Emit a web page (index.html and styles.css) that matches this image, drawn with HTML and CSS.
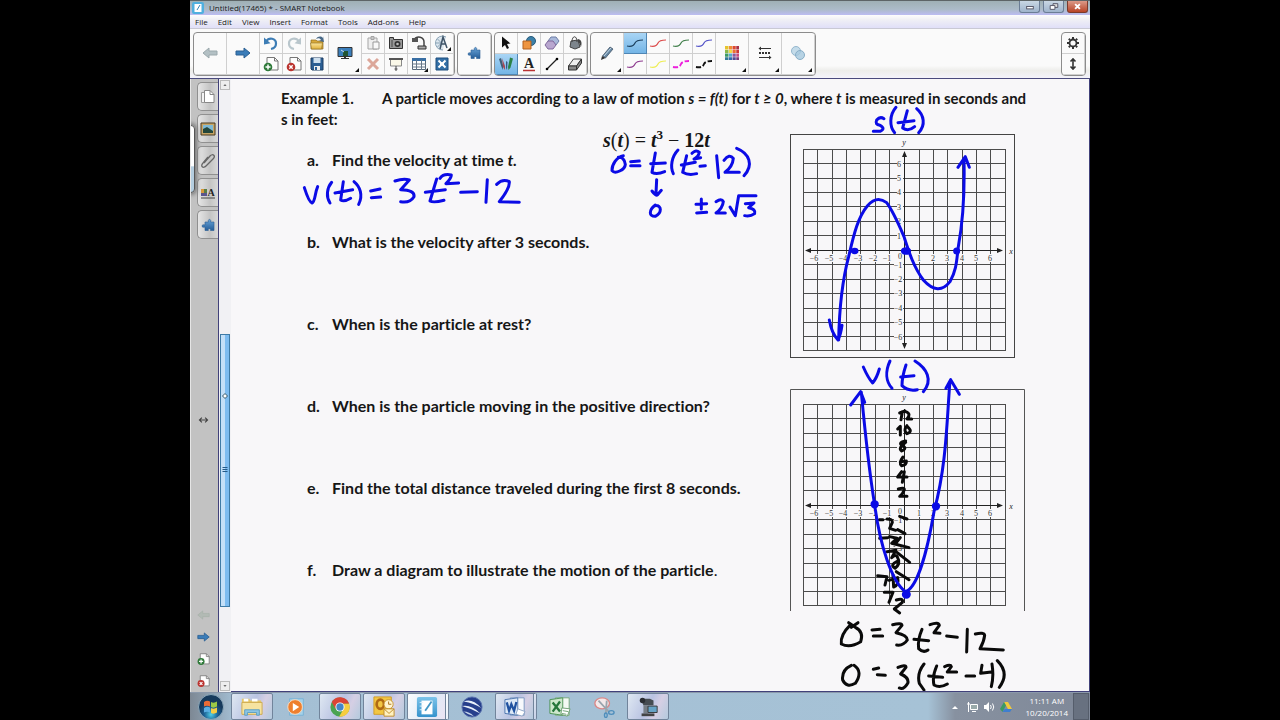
FILE: index.html
```html
<!DOCTYPE html>
<html lang="en">
<head>
<meta charset="utf-8">
<title>Untitled(17465) * - SMART Notebook</title>
<link rel="stylesheet" href="styles.css">
</head>
<body>
<svg class="defs" aria-hidden="true">
  <defs>
    <linearGradient id="blue" x2="0" y2="1"><stop stop-color="#6aa5d8"/><stop offset="1" stop-color="#245c98"/></linearGradient>
    <linearGradient id="gold" x2="0" y2="1"><stop stop-color="#fbe49a"/><stop offset="1" stop-color="#e0b23c"/></linearGradient>
    <radialGradient id="orbfill" cy=".8"><stop stop-color="#4fd0e8"/><stop offset=".55" stop-color="#1c5f93"/><stop offset="1" stop-color="#163a5c"/></radialGradient>
    <linearGradient id="sky" x2="0" y2="1"><stop stop-color="#7cc4ea"/><stop offset="1" stop-color="#3592cc"/></linearGradient>
    <symbol id="arrow" viewBox="0 0 16 12"><path d="M1 4h8V1l6 5-6 5V8H1z"/></symbol>
    <symbol id="sheet" viewBox="0 0 16 16"><path d="M4 1.500h7.500l3.500 3.500V14H4z" fill="#fdfdfd" stroke="#777"/><path d="M11.500 1.500V5H15" fill="none" stroke="#777"/></symbol>
    <symbol id="page-add" viewBox="0 0 16 16"><use href="#sheet"/><circle cx="5" cy="11" r="4.300" fill="#2f7a3a"/><path d="M5 8.500v5M2.500 11h5" stroke="#fff" stroke-width="1.500"/></symbol>
    <symbol id="page-del" viewBox="0 0 16 16"><use href="#sheet"/><circle cx="5" cy="11" r="4.300" fill="#bb3430"/><path d="M3.300 9.300l3.400 3.400M6.700 9.300l-3.400 3.400" stroke="#fff" stroke-width="1.400"/></symbol>
    <symbol id="undo" viewBox="0 0 16 16"><path d="M3 6.500C6 2 13 3 13 8.500c0 3-2.500 5-5 5.500" fill="none" stroke-width="2.200"/><path d="M1 2.500v7l6.500-1.300z" stroke="none"/></symbol>
    <symbol id="puzzle" viewBox="0 0 16 16"><path d="M6 5h2.500C7 1.500 12 1.500 10.500 5H14v8.500h-3.500c.8-2.500-3-2.500-2.200 0H5v-3.500C1 11.500 1 6.500 5 8V5z" fill="url(#blue)" stroke="#2b5f96" stroke-width=".6"/></symbol>
    <symbol id="wave" viewBox="0 0 18 10"><path d="M1 8C6 9 8 7.500 9 5s4-3 8-3" fill="none"/></symbol>
    <symbol id="grid" viewBox="0 0 236 224">
      <path d="M13.500 16V217M27.500 16V217M42.500 16V217M56.500 16V217M70.500 16V217M85.500 16V217M99.500 16V217M129.500 16V217M143.500 16V217M157.500 16V217M172.500 16V217M186.500 16V217M200.500 16V217M215.500 16V217M13 15.500H216M13 29.500H216M13 44.500H216M13 58.500H216M13 72.500H216M13 87.500H216M13 101.500H216M13 130.500H216M13 145.500H216M13 159.500H216M13 174.500H216M13 188.500H216M13 202.500H216M13 216.500H216" stroke="#4c4c4c" fill="none"/>
      <path d="M114.500 20V214M17 116.500H212" stroke="#222"/>
      <path d="M15 116.500l6-2.500v5zM213 116.500l-6-2.500v5z" fill="#222"/>
      <g fill="#f8f7f9"><path d="M19 120h9v8h-9zM34 120h9v8h-9zM49 120h9v8h-9zM63 120h9v8h-9zM78 120h9v8h-9zM92 120h9v8h-9zM108 118h5v9h-5zM127 120h4v8h-4zM141 120h5v8h-5zM155 120h5v8h-5zM169 120h6v8h-6zM184 120h5v8h-5zM198 120h5v8h-5z"/></g>
      <g class="graph-num"><text x="24" y="127">−6</text><text x="39" y="127">−5</text><text x="53" y="127">−4</text><text x="68" y="127">−3</text><text x="83" y="127">−2</text><text x="97" y="127">−1</text><text x="110" y="125">0</text><text x="129" y="127">1</text><text x="143" y="127">2</text><text x="157" y="127">3</text><text x="172" y="127">4</text><text x="186" y="127">5</text><text x="200" y="127">6</text></g>
      <g class="graph-var"><text x="114" y="11">y</text><text x="221" y="120">x</text></g>
    </symbol>
  </defs>
</svg>

<div class="desktop">
  <header class="titlebar">
    <svg class="app-icon" viewBox="0 0 12 12"><rect width="12" height="12" rx="2" fill="#50b0df"/><path d="M2.500 2h7v8h-7z" fill="#fff"/><path d="M5 8l3-5" stroke="#3284b8"/></svg>
    <span class="title">Untitled(17465) * - SMART Notebook</span>
    <div class="window-buttons">
      <button aria-label="Minimize"><svg viewBox="0 0 20 11"><rect x="7" y="5.500" width="7" height="2.500" fill="#fff" stroke="#556"/></svg></button>
      <button aria-label="Restore"><svg viewBox="0 0 20 11"><path d="M9.500 2.500h5v4h-5z" fill="#ddd" stroke="#556"/><path d="M6.500 4.500h5v4h-5z" fill="#fff" stroke="#556"/></svg></button>
      <button class="close" aria-label="Close"><svg viewBox="0 0 20 11"><path d="M7.500 3l5 5M12.500 3l-5 5" stroke="#fff" stroke-width="2"/></svg></button>
    </div>
  </header>

  <nav class="menubar">
    <button>File</button><button>Edit</button><button>View</button><button>Insert</button><button>Format</button><button>Tools</button><button>Add-ons</button><button>Help</button>
  </nav>

  <div class="toolbar">
    <div class="group">
      <button class="tall" aria-label="Previous page"><svg class="i16 flip pale-arrow"><use href="#arrow"/></svg></button>
      <button class="tall" aria-label="Next page"><svg class="i16 blue-arrow"><use href="#arrow"/></svg></button>
      <button aria-label="Undo"><svg class="i16 undo"><use href="#undo"/></svg></button>
      <button aria-label="Add page"><svg class="i16"><use href="#page-add"/></svg></button>
      <button aria-label="Redo"><svg class="i16 flip redo"><use href="#undo"/></svg></button>
      <button aria-label="Delete page"><svg class="i16"><use href="#page-del"/></svg></button>
      <button aria-label="Open"><svg class="i16" viewBox="0 0 16 16"><path d="M2 5h5l1 1h6v8H2z" fill="#d9a93a" stroke="#8d6c1e" stroke-width=".7"/><path d="M1.500 8h12l-1 6h-10z" fill="url(#gold)" stroke="#9a7a2c" stroke-width=".7"/><path d="M7 4c2-3 5-3 7-1v-2l1 6-5-1 2-1c-1-2-3-2-5-1z" fill="#4a6a88"/></svg></button>
      <button aria-label="Save"><svg class="i16" viewBox="0 0 16 16"><path d="M2 2h12v12H3l-1-1z" fill="#2b5e93" stroke="#1d3d63"/><path d="M4.500 2h7v5h-7z" fill="#cfe0ef"/><path d="M5 10h6v4H5z" fill="#eee"/><path d="M6 11h2v3H6z" fill="#2b5e93"/></svg></button>
      <button class="tall more" aria-label="Display"><svg class="i16" viewBox="0 0 16 16"><path d="M1 2.500h14v9H1z" fill="#3b7fbc" stroke="#333"/><path d="M7 11h2v2h3v1H4v-1h3z" fill="#333"/><path d="M6 6h5v5H6z" fill="#253"/><path d="M4 5l3 2" stroke="#cde"/></svg></button>
      <button aria-label="Paste"><svg class="i16" viewBox="0 0 16 16"><path d="M3 3h9v11H3zM6 1.500h3v3H6z" fill="#eee" stroke="#a5a5a5"/><path d="M8 7h6v7H8z" fill="#f8f8f8" stroke="#999"/></svg></button>
      <button aria-label="Delete"><svg class="i16" viewBox="0 0 16 16"><path d="M3 3l10 10M13 3L3 13" stroke="#dca79a" stroke-width="3"/></svg></button>
      <button aria-label="Screen capture"><svg class="i16" viewBox="0 0 16 16"><path d="M1.500 2.500v11h13v-9h-9v-2z" fill="#999" stroke="#333"/><circle cx="9.500" cy="9" r="3" fill="#333"/><circle cx="9.500" cy="9" r="1.300" fill="#bbb"/><path d="M4 5v7" stroke="#444"/></svg></button>
      <button aria-label="Screen shade"><svg class="i16" viewBox="0 0 16 16"><path d="M1 3h14" stroke="#555" stroke-width="2"/><path d="M2.500 4v6h11V4" fill="#faf8e8" stroke="#888"/><path d="M8 10v5" stroke="#444"/><path d="M6.500 13h3" stroke="#444"/></svg></button>
      <button aria-label="Document camera"><svg class="i16" viewBox="0 0 16 16"><path d="M3 5c3-5 10-3 10 2v5" fill="none" stroke="#444" stroke-width="1.500"/><path d="M1 3h6v4H1z" fill="#555"/><path d="M7 11h8v3H7z" fill="#aaa" stroke="#333"/></svg></button>
      <button class="more" aria-label="Table"><svg class="i16" viewBox="0 0 16 16"><path d="M1.500 2.500h13v11h-13z" fill="#fff" stroke="#567"/><path d="M1 2h14v3H1z" fill="#386ea3"/><path d="M1 8h14M1 11h14M5.500 4v10M10.500 4v10" stroke="#678"/></svg></button>
      <button class="more" aria-label="Measurement tools"><svg class="i16" viewBox="0 0 16 16"><path d="M12 2A7 7 0 1 0 9 15" fill="#dbe6ee" stroke="#8aa3b5"/><path d="M2 8h6M3.500 4l4 4M3.500 12l4-4" stroke="#8aa3b5"/><path d="M6 14l3-12 4 11M7 9h5" fill="none" stroke="#3f5468" stroke-width="1.500"/></svg></button>
      <button aria-label="Activity builder"><svg class="i16" viewBox="0 0 16 16"><path d="M2 2h12v12H2z" fill="#3470a6" stroke="#1d4c7c"/><path d="M4.500 4.500l7 7M11.500 4.500l-7 7" stroke="#fff" stroke-width="2"/><path d="M6 8h4" stroke="#fff" stroke-width="3"/></svg></button>
    </div>
    <div class="group">
      <button class="tall" aria-label="Add-ons"><svg class="i16"><use href="#puzzle"/></svg></button>
    </div>
    <div class="group">
      <button aria-label="Select"><svg class="i16" viewBox="0 0 16 16"><path d="M4 1.500v11l3-2.500 2 4 2-1-2-4 3.500-.5z" fill="#111"/></svg></button>
      <button class="on" aria-label="Pens"><svg class="i16" viewBox="0 0 16 16"><path d="M1 3l2.500 8 1.500 3V9L3 2z" fill="#3e5c74"/><path d="M4 2l3 8v4L5 11z" fill="#a84a56"/><path d="M8 5l1.500 1L9 14l-1-2z" fill="#345a86"/><path d="M12 1.500l3 1-2.500 9-2 2.500-.5-3z" fill="#2b8146"/></svg></button>
      <button aria-label="Shapes"><svg class="i16" viewBox="0 0 16 16"><circle cx="10" cy="6" r="4.500" fill="#3c80a8" stroke="#26597a"/><path d="M2 6h8v8H2z" fill="#ee9440" stroke="#b3601e"/></svg></button>
      <button aria-label="Text"><svg class="i16" viewBox="0 0 16 16"><text x="8" y="12" class="letter-icon">A</text><path d="M2 14.500h12" stroke="#b33" stroke-width="1.500"/></svg></button>
      <button aria-label="Regular polygons"><svg class="i16" viewBox="0 0 16 16"><path d="M7 2h5l3 4-3 4H7L4 6z" fill="#a9b8da" stroke="#6d7da5"/><path d="M4 6h5l3 4-3 4H4l-3-4z" fill="#b8a6cf" stroke="#80699c"/></svg></button>
      <button aria-label="Lines"><svg class="i16" viewBox="0 0 16 16"><path d="M3 13L13 3" stroke="#222" stroke-width="1.300"/><circle cx="3" cy="13" r="1.300"/><circle cx="13" cy="3" r="1.300"/></svg></button>
      <button aria-label="Fill"><svg class="i16" viewBox="0 0 16 16"><path d="M4 6l7-1 2 7-5 2-5-2z" fill="#7d858c" stroke="#444"/><path d="M5 7c0-7 5-7 5 0" fill="none" stroke="#444"/><path d="M11 4c4 1 4 4 3 8-1-2-1-4-3-5z" fill="#444"/></svg></button>
      <button aria-label="Eraser"><svg class="i16" viewBox="0 0 16 16"><path d="M1.500 10l5-7h8l-5 7z" fill="#eee" stroke="#444"/><path d="M1.500 10h8v4h-8zM9.500 10l5-7v4l-5 7z" fill="#888" stroke="#333"/></svg></button>
    </div>
    <div class="group">
      <button class="tall more" aria-label="Pen types"><svg class="i16" viewBox="0 0 16 16"><path d="M3.500 11L11 2l3 2-7.500 9z" fill="#6688a4" stroke="#445668" stroke-width=".8"/><path d="M3 11l3.500 2L2 15z" fill="#333"/><path d="M5 11l7-8" stroke="#c5d8e6"/></svg></button>
      <button class="on" aria-label="Black pen"><svg class="wave" stroke="#1d405e"><use href="#wave"/></svg></button>
      <button aria-label="Purple pen"><svg class="wave" stroke="#8f3d91"><use href="#wave"/></svg></button>
      <button aria-label="Red pen"><svg class="wave" stroke="#dc4b4b"><use href="#wave"/></svg></button>
      <button aria-label="Yellow highlighter"><svg class="wave" stroke="#eeee55"><use href="#wave"/></svg></button>
      <button aria-label="Green pen"><svg class="wave" stroke="#42804c"><use href="#wave"/></svg></button>
      <button aria-label="Magenta dashed pen"><svg class="wave dashed" stroke="#ec20dc"><use href="#wave"/></svg></button>
      <button aria-label="Blue pen"><svg class="wave" stroke="#5454c8"><use href="#wave"/></svg></button>
      <button aria-label="Black dashed pen"><svg class="wave dashed" stroke="#111"><use href="#wave"/></svg></button>
      <button class="tall more" aria-label="Color"><svg class="i16" viewBox="0 0 16 16"><path d="M1 1h4v4H1z" fill="#e5c42e"/><path d="M5 1h3v4H5z" fill="#ef8f35"/><path d="M8 1h4v4H8z" fill="#dd4a30"/><path d="M12 1h3v4h-3z" fill="#a93249"/><path d="M1 5h4v3H1z" fill="#8bb84a"/><path d="M5 5h3v3H5z" fill="#efd84a"/><path d="M8 5h4v3H8z" fill="#eb7030"/><path d="M12 5h3v3h-3z" fill="#cc3838"/><path d="M1 8h4v4H1z" fill="#3d9a65"/><path d="M5 8h3v4H5z" fill="#57aaca"/><path d="M8 8h4v4H8z" fill="#8d579c"/><path d="M12 8h3v4h-3z" fill="#c74d83"/><path d="M1 12h4v3H1z" fill="#347b95"/><path d="M5 12h3v3H5z" fill="#326bac"/><path d="M8 12h4v3H8z" fill="#514a93"/><path d="M12 12h3v3h-3z" fill="#7a3b7b"/><path d="M4.500 1v14M8.500 1v14M12 1v14M1 4.500h14M1 8.500h14M1 12h14" stroke="#f8f7f9" stroke-width=".5"/></svg></button>
      <button class="tall more" aria-label="Line style"><svg class="i16" viewBox="0 0 16 16"><path d="M2 3.500h12M2 12.500h12" stroke="#333"/><path d="M2 8h12" stroke="#333" stroke-width="2" stroke-dasharray="2 1"/><path d="M4 1.500l-2.500 2 2.500 2M12 10.500l2.500 2-2.500 2" fill="#333"/></svg></button>
      <button class="tall more" aria-label="Transparency"><svg class="i16" viewBox="0 0 16 16"><circle cx="6" cy="6" r="4.500" fill="#c4dcea" stroke="#95b7ce"/><circle cx="10" cy="10" r="4.500" fill="#a6c9df" fill-opacity=".8" stroke="#88adc6"/></svg></button>
    </div>
    <div class="group end">
      <button aria-label="Settings"><svg class="i16" viewBox="0 0 16 16"><circle cx="8" cy="8" r="3.500" fill="none" stroke="#333" stroke-width="1.800"/><path d="M8 2v2M8 12v2M2 8h2M12 8h2M3.800 3.800l1.300 1.300M10.900 10.900l1.300 1.300M3.800 12.200l1.300-1.300M10.900 5.100l1.300-1.300" stroke="#333" stroke-width="2"/></svg></button>
      <button aria-label="Move toolbar"><svg class="i16" viewBox="0 0 16 16"><path d="M8 3v10M5.500 5.500L8 3l2.500 2.500M5.500 10.500L8 13l2.500-2.500" fill="none" stroke="#333" stroke-width="1.600"/></svg></button>
    </div>
  </div>

  <div class="workspace">
    <aside class="sidebar">
      <div class="popout"></div>
      <div class="tabs">
        <button aria-label="Page sorter"><svg class="i16" viewBox="0 0 16 16"><path d="M1.500 3.500h8v10h-8z" fill="#f4f4f4" stroke="#999"/><path d="M4.500 1.500H10l4 4v8H4.500z" fill="#fff" stroke="#888"/><path d="M10 1.500v4h4" fill="none" stroke="#888"/></svg></button>
        <button aria-label="Gallery"><svg class="i16" viewBox="0 0 16 16"><path d="M1 2h14v12H1z" fill="#c7a566" stroke="#4b3a20"/><path d="M3 4h10v8H3z" fill="#7fb9d4"/><path d="M3 8l4-2 6 4v2H3z" fill="#23463a"/></svg></button>
        <button aria-label="Attachments"><svg class="i16" viewBox="0 0 16 16"><path d="M4 10l6-7c3-3 6 0 3 3l-7 7c-3 3-6 0-3-3l5-6" fill="none" stroke="#666" stroke-width="1.300"/></svg></button>
        <button aria-label="Properties"><svg class="i16" viewBox="0 0 16 16"><path d="M1 4h3v4H1z" fill="#d7973a"/><path d="M4 4h3v4H4z" fill="#597d47"/><path d="M1 8h6v3H1z" fill="#59548e"/><text x="11" y="11" class="letter-small">A</text><path d="M1 13h14" stroke="#444"/></svg></button>
        <button aria-label="Add-ons"><svg class="i16"><use href="#puzzle"/></svg></button>
      </div>
      <button class="bare" aria-label="Resize sidebar"><svg class="i16" viewBox="0 0 16 16"><path d="M3 8h10M6 5L3 8l3 3M10 5l3 3-3 3" fill="none" stroke="#444" stroke-width="1.400"/></svg></button>
      <div class="page-nav">
        <button class="bare" aria-label="Previous page"><svg class="i18 flip faint-arrow"><use href="#arrow"/></svg></button>
        <button class="bare" aria-label="Next page"><svg class="i18 blue-arrow"><use href="#arrow"/></svg></button>
        <button class="bare" aria-label="Add page"><svg class="i18"><use href="#page-add"/></svg></button>
        <button class="bare" aria-label="Delete page"><svg class="i18"><use href="#page-del"/></svg></button>
      </div>
    </aside>

    <div class="scrollbar">
      <button aria-label="Scroll up"><svg viewBox="0 0 10 10"><path d="M3 6l2-2 2 2z" fill="#444"/></svg></button>
      <div class="track">
        <div class="thumb">
          <svg viewBox="0 0 8 8"><path d="M4 1.500L6.500 4 4 6.500 1.500 4z" fill="#fff" stroke="#356"/></svg>
          <svg viewBox="0 0 8 8"><path d="M1.500 1.500h5M1.500 3.500h5M1.500 5.500h5" stroke="#245a88"/></svg>
        </div>
      </div>
      <button aria-label="Scroll down"><svg viewBox="0 0 10 10"><path d="M3 4l2 2 2-2z" fill="#444"/></svg></button>
    </div>

    <main class="page">
      <p class="intro"><span class="label">Example 1.</span>A particle moves according to a law of motion <i>s = f(t)</i> for <i>t ≥ 0</i>, where <i>t</i> is measured in seconds and<br>s in feet:</p>
      <div class="columns">
        <section class="problem">
          <p class="formula"><i>s</i><span class="thin">(</span><i>t</i><span class="thin">) =</span> <i>t</i><sup>3</sup> <span class="thin">−</span> 12<i>t</i></p>
          <ol class="questions">
            <li><span class="mark">a.</span><span>Find the velocity at time <i>t.</i></span></li>
            <li><span class="mark">b.</span><span>What is the velocity after 3 seconds.</span></li>
            <li><span class="mark">c.</span><span>When is the particle at rest?</span></li>
            <li><span class="mark">d.</span><span>When is the particle moving in the positive direction?</span></li>
            <li><span class="mark">e.</span><span>Find the total distance traveled during the first 8 seconds.</span></li>
            <li><span class="mark">f.</span><span>Draw a diagram to illustrate the motion of the particle<span class="thin">.</span></span></li>
          </ol>
        </section>
        <section class="graphs">
          <svg class="graph" viewBox="0 0 236 224" role="img" aria-label="Graph of s(t)">
            <rect x=".5" y=".5" width="224" height="223" fill="none" stroke="#444"/>
            <use href="#grid"/>
            <path d="M114.500 17l-2.500 6h5zM114.500 215l-2.500-6h5z" fill="#222"/>
            <path d="M107 26h6v8h-6zM107 41h6v8h-6zM107 55h6v8h-6zM107 69h6v8h-6zM107 84h6v8h-6zM107 98h6v8h-6zM104 127h9v8h-9zM104 141h9v8h-9zM104 155h9v8h-9zM104 170h9v8h-9zM104 184h9v8h-9zM104 199h9v8h-9z" fill="#f8f7f9"/>
            <g class="graph-num"><text x="109" y="33">6</text><text x="109" y="47">5</text><text x="109" y="61">4</text><text x="109" y="76">3</text><text x="109" y="90">2</text><text x="109" y="105">1</text><text x="108" y="134">−1</text><text x="108" y="148">−2</text><text x="108" y="162">−3</text><text x="108" y="177">−4</text><text x="108" y="191">−5</text><text x="108" y="206">−6</text></g>
          </svg>
          <svg class="graph" viewBox="0 0 236 224" role="img" aria-label="Graph of v(t)">
            <path d="M.5 222V.5H234.500V222" fill="none" stroke="#555"/>
            <use href="#grid"/>
            <path d="M107 17h6v82h-6zM104 127h9v8h-9z" fill="#f8f7f9"/>
            <g class="graph-num"><text x="108" y="134">−1</text><text x="110" y="162">3</text></g>
          </svg>
        </section>
      </div>

      <svg class="ink" viewBox="230 79 860 612" aria-hidden="true">
        <g class="blue-ink">
          <g transform="translate(279 85) scale(.3333)">
            <path d="M73 308C80 330 88 352 96 354C106 350 104 325 113 305M155 292C140 310 138 335 150 354M190 290L182 345Q192 352 212 340M165 324L218 314M222 290C240 305 250 330 236 358M272 318L300 312M274 338L302 336"/>
            <path d="M345 288Q370 280 388 285L362 314Q405 315 402 335Q390 355 362 350M470 282L450 348Q460 354 492 346M436 322L496 314M480 280Q490 265 514 270Q514 280 498 296L536 294M542 322L592 320M622 284L618 352M650 298Q668 280 688 290Q690 310 658 350L718 352"/>
          </g>
          <g transform="translate(589 85) scale(.3333)">
            <path d="M100 212C80 215 65 240 66 257C75 268 105 255 106 238C104 222 95 215 85 217M122 230L148 228M122 242L150 242M196 204L186 262Q200 270 224 260M182 236L226 234M264 195C245 215 240 245 250 266M290 212L278 262Q295 272 320 266M274 240L316 232M306 205Q318 192 328 202Q326 215 312 222L332 218M330 244L346 242M380 212L386 278M402 226Q418 205 430 220Q428 245 405 262L448 262M440 190C478 205 492 240 462 272"/>
            <path d="M200 284L198 326M186 318Q198 334 202 330L214 316M196 360C176 375 176 395 196 394C216 385 216 360 196 362M334 342L334 372M318 358L350 356M320 384L350 382M378 350Q395 338 400 350Q398 370 378 384L406 384M420 366L436 392L446 332L498 332M466 356L492 354L476 368Q498 372 494 386Q480 396 464 392"/>
          </g>
          <g transform="translate(779 100) scale(.3333)">
            <path d="M312 56Q300 48 290 60Q284 74 300 76Q318 86 300 94L280 94M348 22C328 45 328 80 344 98M382 32L368 84Q385 96 404 80M354 68L402 62M410 26C432 45 438 75 416 98"/>
            <path d="M176 720C178 620 190 530 206 470C222 400 235 350 262 318Q290 285 320 308C340 335 355 370 372 410C385 450 400 500 430 540Q475 590 510 545C530 510 530 480 535 440C548 370 555 300 552 175M534 202L556 170L568 202M148 660Q155 700 174 720Q182 705 186 676"/>
            <ellipse cx="224" cy="453" rx="7" ry="5"/><ellipse cx="378" cy="453" rx="11" ry="7"/><ellipse cx="530" cy="453" rx="6" ry="6"/>
          </g>
          <g transform="translate(779 355) scale(.3333)">
            <path d="M250 36Q265 70 278 84Q290 70 298 42M330 18C315 50 318 80 336 100M378 30Q366 65 366 92Q385 110 412 104M362 66L402 62M405 18C440 40 460 75 430 110"/>
          </g>
        </g>
        <g class="black-ink">
          <g transform="translate(780 355) scale(.3333)">
            <path d="M356 174L372 168M364 170L360 194M374 170Q392 176 378 192L392 192M350 222L358 214L358 240M378 212Q366 228 378 236Q398 230 378 214M374 258Q350 262 364 272Q380 280 362 288Q350 280 374 262M366 306Q352 325 362 332Q378 330 376 318L358 320M362 350L350 366L378 366M370 350L364 382M352 402Q370 396 370 404Q366 416 356 424L378 424"/>
            <path d="M295 494L306 494M318 492Q335 492 334 502L326 520L344 526M356 484L378 492M350 524L372 536M296 550L320 548M326 545L348 550L332 565L384 578M340 570L358 548M318 590L345 586L332 608Q345 595 350 608Q360 625 342 640Q325 630 350 618M345 590L386 622M346 650L384 674M290 662L318 665L312 690M324 676L350 668Q355 690 338 696L336 660M310 712L336 712L324 742M346 735Q368 728 364 742L340 762L356 774"/>
          </g>
          <g transform="translate(829 590) scale(.3333)">
            <path d="M62 104Q30 135 34 162Q60 175 92 155Q102 125 76 112L56 98M84 98L64 112M126 120L150 118M130 138L158 138M188 104Q215 98 216 106L198 128Q232 135 232 150Q220 168 200 165M276 118Q262 150 266 176Q280 190 294 180M252 148L296 152M300 104Q326 94 328 106L312 128L330 130M350 138L382 142M412 118L410 186M436 132Q462 126 464 136Q462 155 450 176L520 180"/>
            <path d="M64 226Q34 240 38 270Q50 295 76 280Q100 245 72 226M130 238L146 234M142 254L166 256M204 232Q228 222 228 232L212 252Q236 262 234 278Q222 300 208 294M282 222Q260 250 268 280L282 300M320 228Q306 260 312 285Q330 295 352 282M296 258L338 262M344 230Q362 222 364 230L352 246L380 246M408 258L434 258M456 226L452 250L484 246M486 222Q492 260 484 290M502 212Q540 250 508 292"/>
          </g>
        </g>
        <g class="blue-ink" transform="translate(779 355) scale(.3333)">
          <path d="M244 112C255 230 268 350 284 450C300 570 335 680 376 710C410 700 440 600 462 470C500 330 500 200 510 78M212 150L242 110L254 142M498 100L512 74L538 118"/>
          <circle cx="284" cy="448" r="8"/><circle cx="468" cy="454" r="8"/><circle cx="379" cy="718" r="9"/>
        </g>
      </svg>
    </main>
  </div>

  <footer class="taskbar">
    <button class="start" aria-label="Start"><svg viewBox="0 0 26 26"><circle cx="13" cy="13" r="12.500" fill="url(#orbfill)" stroke="#8da9bb"/><path d="M6 8q3-2 6-.5v5q-3-1.500-6 0z" fill="#e86b35"/><path d="M13 8q3 1.500 6-.5v5q-3 2-6 .5z" fill="#9cca46"/><path d="M6 14q3-2 6-.5v5q-3-1.500-6 0z" fill="#59aee3"/><path d="M13 14q3 1.500 6-.5v5q-3 2-6 .5z" fill="#f6cd45"/></svg></button>
    <div class="tasks">
      <button class="open" aria-label="Explorer"><svg viewBox="0 0 24 24"><path d="M1 3h8l1 2h12v15H1z" fill="#e6c765"/><path d="M3 3h5v3H3zM12 3h6v3h-6z" fill="#fff"/><path d="M1 7h22v13H1z" fill="#f6e3a0" stroke="#cda94b"/><path d="M4 21v-6h16v6h-3v-3H7v3z" fill="#8cc5e4" stroke="#5b9cc0"/></svg></button>
      <button aria-label="Media Player"><svg viewBox="0 0 24 24"><path d="M5 3h15v18H5z" fill="#a5d2ea" stroke="#77b1d5"/><circle cx="11" cy="12" r="8" fill="#ee7f2e" stroke="#f7ddc4"/><path d="M8.500 7.500l7 4.500-7 4.500z" fill="#fff"/></svg></button>
      <button class="open" aria-label="Chrome"><svg viewBox="0 0 24 24"><circle cx="12" cy="12" r="10.500" fill="#4aa350"/><path d="M3 6.500A10.500 10.500 0 0 1 22 8.500H12L7 14z" fill="#da4437"/><path d="M22 8.500A10.500 10.500 0 0 1 11 22.500L16 14V8.500z" fill="#f6cd3f"/><circle cx="12" cy="12" r="5" fill="#fff"/><circle cx="12" cy="12" r="4" fill="#4386c9"/></svg></button>
      <button class="open" aria-label="Outlook"><svg viewBox="0 0 24 24"><path d="M1 1h19v19H1z" fill="#f2c642" stroke="#d09a26"/><ellipse cx="8" cy="9" rx="4" ry="5" fill="none" stroke="#b06a14" stroke-width="3"/><circle cx="17" cy="9" r="5" fill="#fff4cd" stroke="#c89530"/><path d="M17 6v3h3" stroke="#a8701e" fill="none"/><path d="M12 14h11v8H12z" fill="#fff1c1" stroke="#bd8b27"/><path d="M12 14l5.500 5 5.500-5" fill="none" stroke="#bd8b27"/></svg></button>
      <button class="open active stack" aria-label="SMART Notebook"><svg viewBox="0 0 24 24"><rect x="1" y="1" width="22" height="22" rx="2" fill="url(#sky)"/><path d="M6 5h12v15H6z" fill="#fff"/><path d="M10 16l7-10" stroke="#4296c5" stroke-width="2"/><path d="M4 7h4M4 11h4M4 15h4" stroke="#e4f4fc"/></svg></button>
      <button aria-label="Google Earth"><svg viewBox="0 0 24 24"><circle cx="12" cy="12" r="11" fill="#263f8c" stroke="#5a72ae"/><path d="M3 6q9-4 19 7-8-5-19-7z" fill="#e8f0fa"/><path d="M1 11q10-2 20 8-9-5-20-8z" fill="#e8f0fa"/><path d="M3 17q6 0 11 5-6-1-11-5z" fill="#c4d4ea"/></svg></button>
      <button class="open stack" aria-label="Word"><svg viewBox="0 0 24 24"><path d="M7 2h15v19H7z" fill="#f7f9fc" stroke="#7795bd"/><path d="M1 4l14-2v19L1 19z" fill="#dce8f6" stroke="#4a73ad"/><path d="M3 7l2.500 9L8 9l3 7 2.500-9.500" fill="none" stroke="#2152a0" stroke-width="2.500"/><path d="M15 14l8 3-3 5-7-2z" fill="#fff" stroke="#8aa2c4"/></svg></button>
      <button aria-label="Excel"><svg viewBox="0 0 24 24"><path d="M7 2h15v19H7z" fill="#f4faf4" stroke="#76a779"/><path d="M1 4l14-2v19L1 19z" fill="#cee8cd" stroke="#479050"/><path d="M4 7l8 10M12 6L4 17" stroke="#26773b" stroke-width="2.500"/><path d="M14 13l9 1-3 8-7-2z" fill="#fff" stroke="#6a9e6e"/><path d="M15 16l6 1M14 19l5 1" stroke="#6a9e6e"/></svg></button>
      <button aria-label="Snipping Tool"><svg viewBox="0 0 24 24"><ellipse cx="10" cy="8" rx="8" ry="6" fill="#f4e9ea" stroke="#d98787" stroke-width="1.500"/><path d="M6 5l12 13M15 5l-1 14" stroke="#9aa5ae" stroke-width="2"/><ellipse cx="20" cy="18" rx="3" ry="2" fill="none" stroke="#4f8ebc" stroke-width="1.500"/><ellipse cx="14" cy="21" rx="1.500" ry="2.500" fill="none" stroke="#4f8ebc" stroke-width="1.500"/></svg></button>
      <button class="open" aria-label="Recorder"><svg viewBox="0 0 24 24"><path d="M4 3h10l4 2v5H7z" fill="#464c52"/><circle cx="6" cy="5" r="3" fill="#2b2e33"/><path d="M7 10h5v9H7z" fill="#777e86"/><path d="M12 11h10v7H12z" fill="#67a3c6" stroke="#333"/><path d="M5 19h14v3H5z" fill="#444"/></svg></button>
    </div>
    <div class="tray">
      <button aria-label="Show hidden icons"><svg viewBox="0 0 12 12"><path d="M3 8l3-3 3 3z" fill="#fff"/></svg></button>
      <button aria-label="Network"><svg viewBox="0 0 12 12"><path d="M4.500 3.500h7v5h-7zM6 10.500h4M2.500 1v10M1 3h3" fill="#9aa" stroke="#fff"/></svg></button>
      <button aria-label="Volume"><svg viewBox="0 0 12 12"><path d="M1 4h2l3-3v10L3 8H1z" fill="#fff"/><path d="M7.500 4q1.500 2 0 4M9.500 2.500q2.500 3.500 0 7" fill="none" stroke="#fff"/></svg></button>
      <button aria-label="Drive"><svg viewBox="0 0 12 12"><path d="M4 1h4l4 7H8z" fill="#f0c93b"/><path d="M4 1l2 3.500L2.500 11 0 8z" fill="#3a9a63"/><path d="M4.500 8H12l-2 3H2.500z" fill="#3f7ed0"/></svg></button>
    </div>
    <time class="clock">11:11 AM<br>10/20/2014</time>
    <button class="show-desktop" aria-label="Show desktop"></button>
  </footer>
</div>
</body>
</html>
```
FILE: styles.css
```css
* { box-sizing: border-box; }

body {
  margin: 0;
  padding: 0 190px;
  background: #000;
  font-family: "Open Sans", "Noto Sans", sans-serif;
  font-size: 8px;
  color: #1a1a1a;
}

button {
  display: flex;
  align-items: center;
  justify-content: center;
  margin: 0;
  padding: 0;
  border: 0;
  background: none;
  font: inherit;
  color: inherit;
}

p, ol { margin: 0; padding: 0; }

.defs { position: absolute; width: 0; height: 0; }

.desktop {
  display: flex;
  flex-direction: column;
  height: 100vh;
  overflow: hidden;
}

.i16 { width: 16px; height: 16px; }
.i18 { width: 18px; height: 18px; }
.flip { transform: scaleX(-1); }
.blue-arrow { fill: #3a7cb8; stroke: #2a5f92; }
.pale-arrow { fill: #b3c0c4; stroke: #9aa8ac; }
.faint-arrow { fill: #b2bab4; stroke: #a9b3ab; }
.undo { fill: #3d7db5; stroke: #3d7db5; }
.redo { fill: #b9c6cc; stroke: #b9c6cc; }
.letter-icon { font: bold 14px "Liberation Serif", serif; text-anchor: middle; fill: #222; }
.letter-small { font: bold 10px "Liberation Serif", serif; text-anchor: middle; fill: #222; }

/* Window chrome */
.titlebar {
  display: flex;
  align-items: center;
  flex: none;
  height: 15px;
  padding: 0 2px;
  gap: 5px;
  border-top: 1px solid #5d6466;
  background: linear-gradient(#9fb0b5, #acbbc8 60%, #bcbcf2);
}
.app-icon { width: 12px; height: 12px; }
.title { flex: 1; line-height: 14px; }
.window-buttons { display: flex; gap: 3px; align-self: flex-start; }
.window-buttons button {
  width: 21px;
  height: 12px;
  border: 1px solid #6b7d95;
  border-top: 0;
  border-radius: 0 0 3px 3px;
  background: linear-gradient(#c9d7e4, #9fb4cc);
}
.window-buttons .close { background: linear-gradient(#dc9a88, #b84427); border-color: #7b3a2c; }
.window-buttons svg { width: 20px; height: 11px; }

.menubar {
  display: flex;
  align-items: center;
  flex: none;
  height: 14px;
  padding: 0 5px;
  gap: 10px;
  background: linear-gradient(#fdfdfd, #f0f0f5 35%, #e0dff8);
  border-bottom: 1px solid #c9c9d4;
}
.menubar button { line-height: 13px; }

.toolbar {
  display: flex;
  align-items: center;
  flex: none;
  gap: 2px;
  height: 50px;
  padding: 0 4px 0 3px;
  background: linear-gradient(#fafafa 75%, #ededea 85%, #f4f3fb);
  border-bottom: 1px solid #4a4a7c;
}
.group {
  display: grid;
  grid-auto-flow: column;
  grid-template-rows: 21px 21px;
  border: 1px solid #8c8c8c;
  border-radius: 4px;
  background: #fafafa;
  overflow: hidden;
}
.group.end { margin-left: auto; }
.group button {
  position: relative;
  width: 23px;
  border: 0 solid #cfcfcf;
  border-width: 0 1px 1px 0;
}
.group .tall { grid-row: span 2; width: 33px; }
.group .on { background: linear-gradient(#a9d5f5, #74b5e6); border-color: #4f86b4; }
.more::after {
  content: "";
  position: absolute;
  right: 2px;
  bottom: 2px;
  border: 2px solid transparent;
  border-right-color: #111;
  border-bottom-color: #111;
}
.wave { width: 18px; height: 10px; stroke-width: 1.2; }
.dashed { stroke-width: 2; stroke-dasharray: 5 2; }

.workspace { display: flex; flex: 1; min-height: 0; }

/* Sidebar */
.sidebar {
  position: relative;
  display: flex;
  flex-direction: column;
  width: 29px;
  padding: 3px 0 2px 6px;
  border-left: 1px solid #e5e5e5;
  border-right: 1px solid #41417a;
  background: #c2c2c2;
  overflow: hidden;
}
.popout {
  position: absolute;
  left: -4px;
  top: 46px;
  width: 8px;
  height: 68px;
  border: 1px solid #555;
  border-radius: 4px;
  background: linear-gradient(#fff 60%, #b4cddf 62%);
  box-shadow: 0 0 4px 2px #777;
}
.tabs { display: flex; flex-direction: column; gap: 3px; }
.tabs button {
  height: 29px;
  border: 1px solid #909090;
  border-right: 0;
  border-radius: 5px 0 0 5px;
  background: linear-gradient(90deg, #e6e6e6, #c4c4c4 60%, #d8d8d8);
}
.bare { padding-right: 8px; }
.tabs + .bare { margin-top: 173px; }
.page-nav { display: flex; flex-direction: column; gap: 4px; margin-top: auto; }

.scrollbar {
  display: flex;
  flex-direction: column;
  width: 12px;
  padding: 1px;
  background: #f1f1f4;
}
.scrollbar button { height: 10px; border: 1px solid #bbb; background: #eee; }
.scrollbar button svg { width: 10px; height: 10px; }
.track { display: flex; flex: 1; padding: 244px 0 74px; }
.thumb {
  display: flex;
  flex: 1;
  flex-direction: column;
  align-items: center;
  gap: 66px;
  padding-top: 57px;
  border: 1px solid #3f7ba6;
  background: linear-gradient(90deg, #c4e0f8 45%, #7dbcf0 55%);
}
.thumb svg { width: 8px; height: 8px; }

/* Notebook page */
.page {
  position: relative;
  flex: 1;
  padding: 9px 0 0 50px;
  overflow: hidden;
  border-right: 1px solid #41417a;
  border-bottom: 1px solid #41417a;
  background: #f8f7f9;
  font-family: Lato, "Open Sans", sans-serif;
  font-weight: 700;
  font-variant-ligatures: none;
  color: #161616;
}
.intro { font-size: 15px; line-height: 21px; white-space: nowrap; }
.intro .label { display: inline-block; width: 101px; }
.columns { display: flex; }
.problem { width: 509px; }
.formula {
  padding-left: 322px;
  font: bold 20px/20px "Liberation Serif", serif;
}
.formula sup { font-size: 13px; line-height: 0; }
.thin { font-weight: 400; }
.questions {
  display: grid;
  grid-auto-rows: 82px;
  padding-left: 26px;
  list-style: none;
  font-size: 16px;
  line-height: 20px;
}
.questions li { display: flex; white-space: nowrap; }
.mark { width: 25px; }

.graphs { display: flex; flex-direction: column; gap: 31px; padding-top: 4px; }
.graph { width: 236px; height: 224px; }
.graph-num { font: 8px "Liberation Serif", serif; text-anchor: middle; fill: #333; }
.graph-var { font: italic 8px "Liberation Serif", serif; text-anchor: middle; fill: #222; }

.ink { position: absolute; left: 0; top: 0; width: 860px; height: 612px; }
.ink path { fill: none; }
.ink g { stroke-linecap: round; stroke-linejoin: round; }
.blue-ink { stroke: #0b0be6; fill: #0b0be6; stroke-width: 9px; }
.black-ink { stroke: #0a0a0a; stroke-width: 9px; }

/* Taskbar */
.taskbar {
  display: flex;
  flex: none;
  height: 28px;
  padding-right: 1px;
  background: linear-gradient(90deg, #7d8894, #a4bfd4 5%, #a6c2d6 82%, #8791a0 85%, #7f8898);
  border-top: 1px solid #8b99ab;
}
.start { width: 41px; }
.start svg { width: 26px; height: 26px; }
.tasks { display: flex; flex: 1; gap: 2px; }
.tasks button { width: 42px; }
.tasks svg { width: 22px; height: 22px; }
.tasks .open {
  border: 1px solid #71849b;
  border-radius: 2px;
  background: linear-gradient(115deg, #dfe8f2, #b9c3e2 50%, #d6cfe4 70%, #b3cadd);
}
.tasks .active { background: linear-gradient(115deg, #fafcfe, #dfe9f5 60%, #ece4f3); }
.tasks .stack { border-right: 4px double #71849b; }
.tray { display: flex; gap: 5px; padding-right: 14px; }
.tray svg { width: 12px; height: 12px; }
.clock {
  padding: 2px 5px 0 0;
  line-height: 12px;
  text-align: center;
  color: #fff;
}
.show-desktop { width: 16px; border: 1px solid #555d6b; background: #687180; }
```
